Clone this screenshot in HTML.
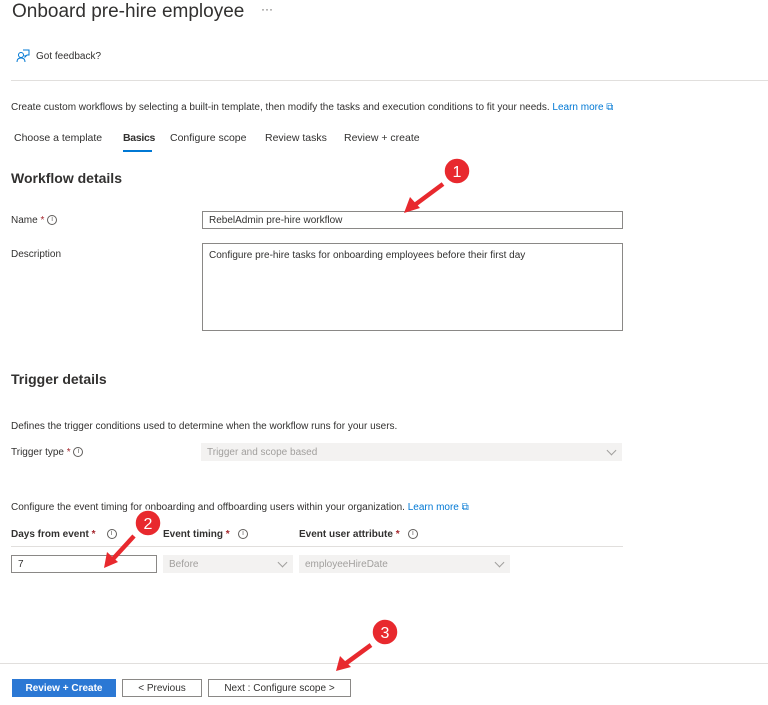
<!DOCTYPE html><html><head><style>
body{margin:0;width:768px;height:705px;background:#fff;font-family:"Liberation Sans",sans-serif;color:#323130;position:relative;overflow:hidden}
.a{position:absolute;white-space:nowrap}
.s{font-size:10px}
.inp{position:absolute;border:1px solid #8a8886;background:#fff;font-size:10px;box-sizing:border-box;padding:0 6px;display:flex;align-items:center}
.dis{position:absolute;background:#f3f2f1;color:#a19f9d;font-size:10px;box-sizing:border-box;padding:0 6px;display:flex;align-items:center}
.chev{position:absolute;right:7px;top:4px;width:6px;height:6px;border-right:1px solid #a19f9d;border-bottom:1px solid #a19f9d;transform:rotate(45deg)}
.i{display:inline-block;width:8px;height:8px;border:1px solid #605e5c;border-radius:50%;font-size:7px;line-height:8px;text-align:center;vertical-align:middle;color:#605e5c}
.r{color:#a4262c}
.lnk{color:#0078d4}
.btn{position:absolute;height:18px;box-sizing:border-box;font-size:10px;border:1px solid #8a8886;background:#fff;display:flex;align-items:center;justify-content:center}
.t{font-size:10.5px}
</style></head><body>
<div class="a" style="left:12px;top:1px;font-size:19px;color:#323130">Onboard pre-hire employee</div>
<div class="a" style="left:261px;top:2px;font-size:12px;color:#605e5c">···</div>
<svg class="a" style="left:16px;top:49px" width="14" height="14" viewBox="0 0 14 14" fill="none" stroke="#0078d4" stroke-width="1"><circle cx="5" cy="6" r="2.5"/><path d="M1 13c0-3 2-4 4-4s4 1 4 4M7 1h6v5h-2l-2 2V6"/></svg>
<div class="a s" style="left:36px;top:51px">Got feedback?</div>
<div class="a" style="left:11px;top:80px;width:757px;height:1px;background:#e1dfdd"></div>
<div class="a s" style="left:11px;top:102px">Create custom workflows by selecting a built-in template, then modify the tasks and execution conditions to fit your needs. <span class="lnk">Learn more ⧉</span></div>
<div class="a t" style="left:14px;top:132px">Choose a template</div>
<div class="a t" style="left:123px;top:132px;font-weight:bold;letter-spacing:-0.3px">Basics</div>
<div class="a" style="left:123px;top:150px;width:29px;height:2px;background:#0078d4"></div>
<div class="a t" style="left:170px;top:132px">Configure scope</div>
<div class="a t" style="left:265px;top:132px">Review tasks</div>
<div class="a t" style="left:344px;top:132px">Review + create</div>
<div class="a" style="left:11px;top:170px;font-size:14px;font-weight:bold;color:#323130">Workflow details</div>
<div class="a s" style="left:11px;top:215px">Name <span class="r">*</span> <span class="i">i</span></div>
<div class="inp" style="left:202px;top:211px;width:421px;height:18px">RebelAdmin pre-hire workflow</div>
<div class="a s" style="left:11px;top:249px">Description</div>
<div class="inp" style="left:202px;top:243px;width:421px;height:88px;align-items:flex-start;padding-top:6px">Configure pre-hire tasks for onboarding employees before their first day</div>
<div class="a" style="left:11px;top:371px;font-size:14px;font-weight:bold">Trigger details</div>
<div class="a s" style="left:11px;top:421px">Defines the trigger conditions used to determine when the workflow runs for your users.</div>
<div class="a s" style="left:11px;top:447px">Trigger type <span class="r">*</span> <span class="i">i</span></div>
<div class="dis" style="left:201px;top:443px;width:421px;height:18px">Trigger and scope based<span class="chev"></span></div>
<div class="a s" style="left:11px;top:502px">Configure the event timing for onboarding and offboarding users within your organization. <span class="lnk">Learn more ⧉</span></div>
<div class="a s" style="left:11px;top:529px;font-weight:bold">Days from event <span class="r">*</span> &nbsp;&nbsp;&nbsp;<span class="i" style="font-weight:normal">i</span></div>
<div class="a s" style="left:163px;top:529px;font-weight:bold">Event timing <span class="r">*</span> &nbsp;&nbsp;<span class="i" style="font-weight:normal">i</span></div>
<div class="a s" style="left:299px;top:529px;font-weight:bold">Event user attribute <span class="r">*</span> &nbsp;&nbsp;<span class="i" style="font-weight:normal">i</span></div>
<div class="a" style="left:11px;top:546px;width:612px;height:1px;background:#e1dfdd"></div>
<div class="inp" style="left:11px;top:555px;width:146px;height:18px">7</div>
<div class="dis" style="left:163px;top:555px;width:130px;height:18px">Before<span class="chev"></span></div>
<div class="dis" style="left:299px;top:555px;width:211px;height:18px">employeeHireDate<span class="chev"></span></div>
<div class="a" style="left:0;top:663px;width:768px;height:1px;background:#e1dfdd"></div>
<div class="btn" style="left:12px;top:679px;width:104px;background:#2b78d4;border-color:#2b78d4;color:#fff;font-weight:bold">Review + Create</div>
<div class="btn" style="left:122px;top:679px;width:80px">&lt; Previous</div>
<div class="btn" style="left:208px;top:679px;width:143px">Next : Configure scope &gt;</div>
<svg class="a" style="left:0;top:0" width="768" height="705">
<g fill="#e8292e" stroke="#e8292e">
<line x1="443" y1="184" x2="412" y2="207" stroke-width="4.5"/><polygon points="404,213 410,197 420,208" stroke="none"/>
<line x1="134" y1="536" x2="112" y2="560" stroke-width="4.5"/><polygon points="104,568 107,552 118,562" stroke="none"/>
<line x1="371" y1="645" x2="345" y2="664" stroke-width="4.5"/><polygon points="336,671 340,656 351,667" stroke="none"/>
</g>
<g font-family="Liberation Sans" font-size="16" fill="#fff" text-anchor="middle">
<circle cx="457" cy="171" r="13" fill="#e8292e" stroke="#fff" stroke-width="1.5"/><text x="457" y="177">1</text>
<circle cx="148" cy="523" r="13" fill="#e8292e" stroke="#fff" stroke-width="1.5"/><text x="148" y="529">2</text>
<circle cx="385" cy="632" r="13" fill="#e8292e" stroke="#fff" stroke-width="1.5"/><text x="385" y="638">3</text>
</g></svg>
</body></html>
